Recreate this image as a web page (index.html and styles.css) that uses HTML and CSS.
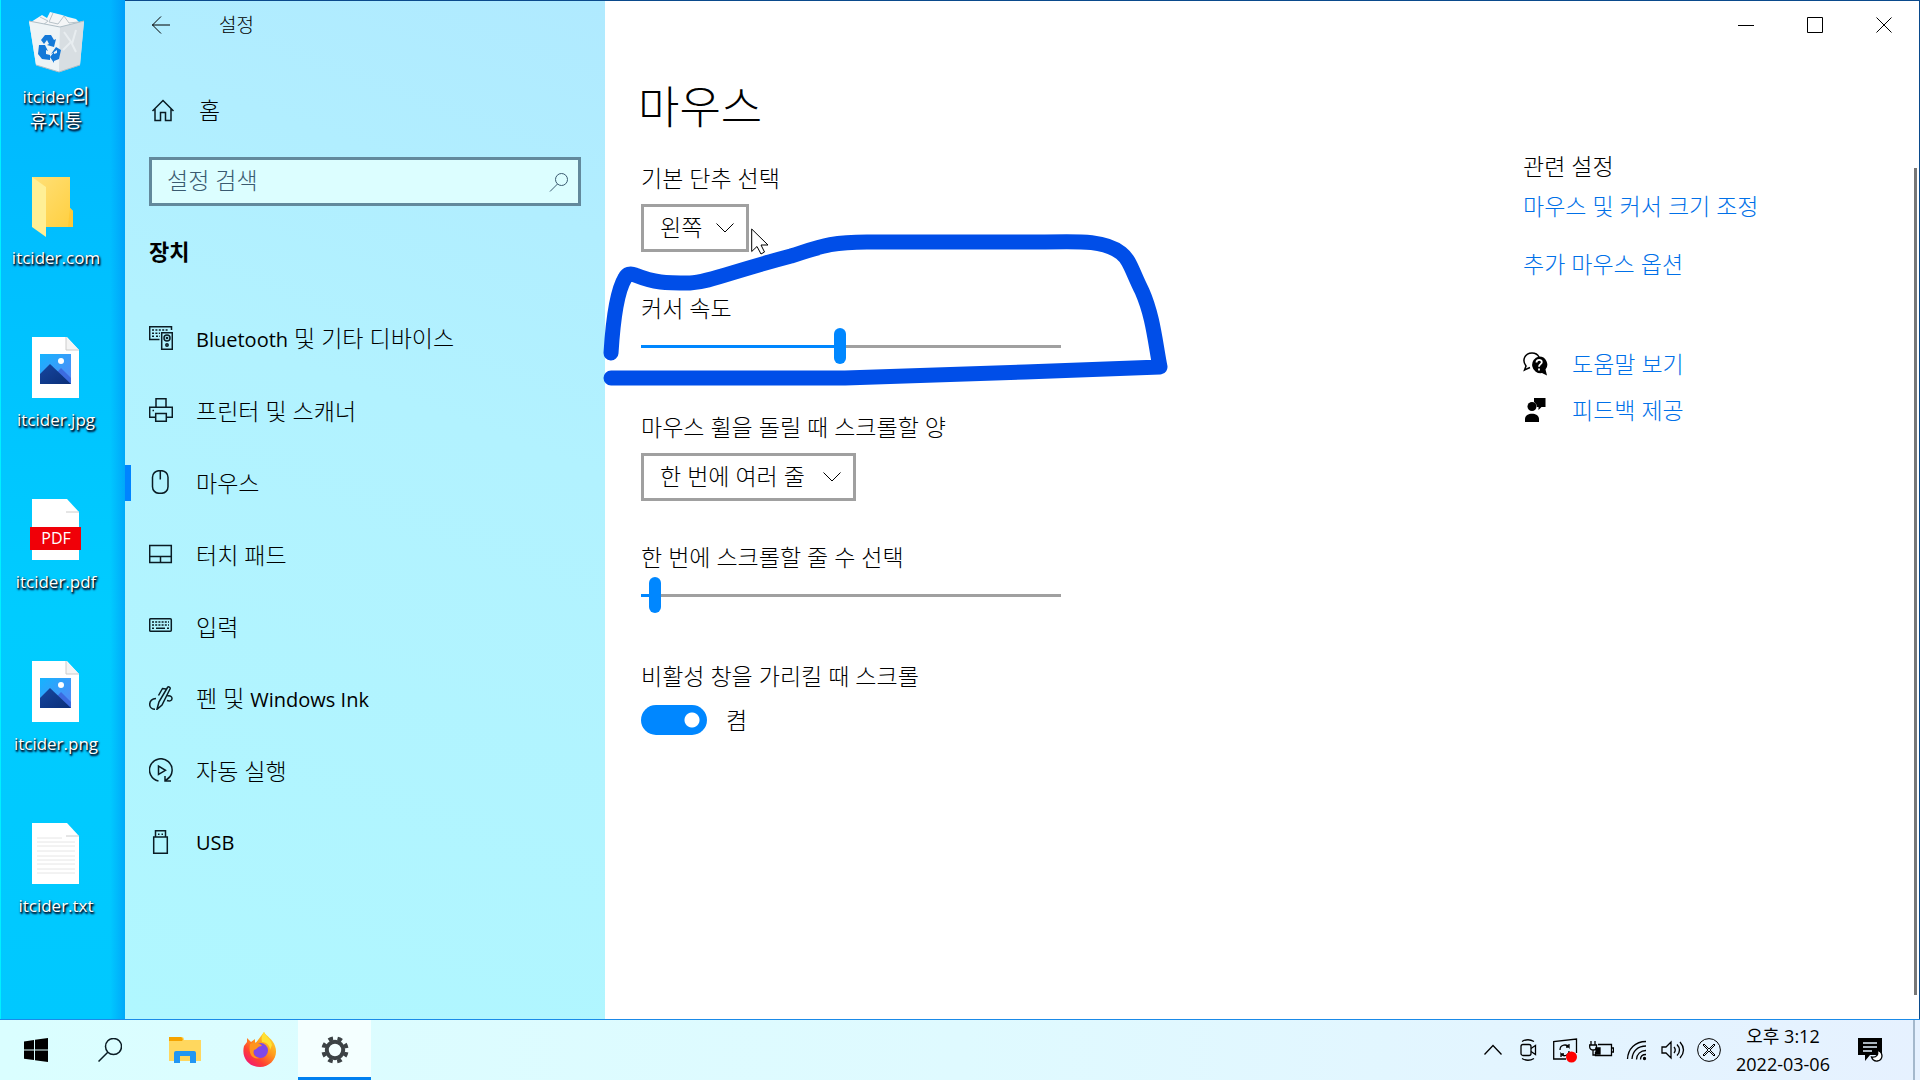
FILE: index.html
```html
<!DOCTYPE html>
<html lang="ko">
<head>
<meta charset="utf-8">
<title>설정</title>
<link rel="stylesheet" href="styles.css">
</head>
<body>
<svg width="0" height="0" class="defs" aria-hidden="true">
  <defs>
    <linearGradient id="sky" x1="0" y1="0" x2="1" y2="1"><stop offset="0" stop-color="#14b4ff"/><stop offset="1" stop-color="#5a86f5"/></linearGradient>
    <linearGradient id="hill" x1="0" y1="0" x2="1" y2="1"><stop offset="0" stop-color="#1746a0"/><stop offset="1" stop-color="#0a2f78"/></linearGradient>
    <linearGradient id="fold" x1="0" y1="0" x2="1" y2="1"><stop offset="0" stop-color="#ffe078"/><stop offset="1" stop-color="#ffcf3f"/></linearGradient>
    <linearGradient id="fox" x1="1" y1="0" x2="0.2" y2="1"><stop offset="0" stop-color="#fff03a"/><stop offset="0.45" stop-color="#ff9a1c"/><stop offset="0.75" stop-color="#ff4033"/><stop offset="1" stop-color="#f0157a"/></linearGradient>
    <symbol id="picture" viewBox="0 0 48 64">
      <path d="M0 1h35l12 13v48H0z" fill="#fff"/><path d="M34 1v13h13" fill="#f4f4f4" stroke="#ccc"/>
      <path d="M8 18h31v30H8z" fill="url(#sky)"/><circle cx="29" cy="25" r="3" fill="#fff"/>
      <path d="M20 42 29 32 39 42v6H20z" fill="#3c6be0"/><path d="M8 38 18 28 39 48H8z" fill="url(#hill)"/>
    </symbol>
  </defs>
</svg>
<div class="screen">
  <nav class="desktop" aria-label="바탕 화면">
    <a class="shortcut" href="#">
      <svg width="56" height="64" viewBox="0 0 56 64">
        <path d="M1 9 8 53l23 7 21-7 4-44-24 5z" fill="#d9edf5"/>
        <path d="M3 10 14 3l5 3 3-6 12 3 6 2 8 2 5 5-21 6z" fill="#f4f6f7"/>
        <path d="M12 5l8 4-5 4M25 1l-4 9 9 2 6-8M36 4l5 7 9-1" fill="none" stroke="#b8c3c9"/>
        <path d="M1 9 32 15 31 60 8 53z" fill="#eef4f6"/><path d="M32 15 56 9 52 53 31 60z" fill="#d8dee2"/>
        <path d="M36 20l7 10-8 8M48 18l-4 14 4 8" stroke="#e8edf0" stroke-width="2" fill="none"/>
        <path d="M1 9 32 15 56 9M8 53l23 7 21-7" fill="none" stroke="#aebdc5"/>
        <g fill="#1479d8"><path d="M13 28l4-5h6l3 5 2-1-2 8-7-2 2-1-2-4-3 4z"/><path d="M11 33l6 0 3 6-2-1 0 4 4 1 0 5-8-1-4-5z"/><path d="M23 42l5-7 5 3-2 9-5 2v2l-4-6 4-5v2l3-1 0-3z"/></g>
      </svg>
      <span><span class="latin">itcider</span>의<br>휴지통</span>
    </a>
    <a class="shortcut" href="#">
      <svg width="48" height="64" viewBox="0 0 48 64"><path d="M0 3h38v31l3 3v16H0z" fill="url(#fold)"/><path d="M38 34l3 3v16h-5z" fill="#ffc936"/><path d="M0 3l14 10v50L0 53z" fill="#ffef95"/></svg>
      <span class="latin">itcider.com</span>
    </a>
    <a class="shortcut" href="#"><svg width="48" height="64"><use href="#picture"/></svg><span class="latin">itcider.jpg</span></a>
    <a class="shortcut" href="#">
      <svg width="52" height="64" viewBox="0 0 52 64"><path d="M2 1h35l12 13v48H2z" fill="#fff"/><path d="M36 14h13" stroke="#ccc"/><path d="M0 29h51v23H0z" fill="#f00008"/><text x="26" y="46" text-anchor="middle" class="pdf-tag">PDF</text></svg>
      <span class="latin">itcider.pdf</span>
    </a>
    <a class="shortcut" href="#"><svg width="48" height="64"><use href="#picture"/></svg><span class="latin">itcider.png</span></a>
    <a class="shortcut" href="#">
      <svg width="48" height="64" viewBox="0 0 48 64"><path d="M0 1h35l12 13v48H0z" fill="#fff"/><path d="M34 14h13" stroke="#ccc"/><path d="M5 16h25M5 20h38M5 24h38M5 29h38M5 34h38M5 38h38M5 42h38M5 47h38M5 51h38" stroke="#e6e6e6"/></svg>
      <span class="latin">itcider.txt</span>
    </a>
  </nav>

  <div class="window">
    <aside class="sidebar">
      <div class="title-row">
        <button class="back" aria-label="뒤로"><svg width="20" height="20" viewBox="0 0 20 20"><path d="M1 10h18M10 1.500 1.500 10l8.500 8.500"/></svg></button>
        <span>설정</span>
      </div>
      <a class="home" href="#"><svg width="24" height="24" viewBox="0 0 24 24" class="bold-line"><path d="M1.500 13 12 2.500 22.500 13M4 11v11.500h5.500v-8h5v8H20V11"/></svg><span>홈</span></a>
      <div class="search">
        <input type="text" placeholder="설정 검색" aria-label="설정 검색">
        <svg width="20" height="20" viewBox="0 0 20 20"><circle cx="12.500" cy="7.500" r="6"/><path d="M8.500 12 1 19.500"/></svg>
      </div>
      <h2>장치</h2>
      <ul class="menu">
        <li><a href="#"><svg width="24" height="24" viewBox="0 0 24 24" class="bold-line"><path d="M10.500 13.500H.7V.7h21.800V4M12.700 6.700h10.600v16.600H12.700z"/><circle cx="18" cy="12" r="3"/><circle cx="18" cy="12" r=".6"/><circle cx="18" cy="19" r="1.200"/><path d="M3 4h17M3 7.200h8M3 10.300h2M7 10.300h4" stroke-dasharray="2 1.400"/></svg><span><span class="latin">Bluetooth</span> 및 기타 디바이스</span></a></li>
        <li><a href="#"><svg width="24" height="24" viewBox="0 0 24 24" class="bold-line"><path d="M7 9V.7h10V9M6 19.300H.7V9.300h22.600v10H18M6.700 15.500h10.600v7.800H6.700zM3.500 12.500h1.500"/></svg><span>프린터 및 스캐너</span></a></li>
        <li class="current"><a href="#" aria-current="page"><svg width="24" height="24" viewBox="0 0 24 24" class="bold-line"><rect x="3.500" y=".7" width="15.500" height="22.600" rx="6.500"/><path d="M11.300 1v8.500"/></svg><span>마우스</span></a></li>
        <li><a href="#"><svg width="24" height="24" viewBox="0 0 24 24" class="bold-line"><path d="M.7 3.500h21.600v17H.7zM.7 14.500h21.600M11.500 14.500v6"/></svg><span>터치 패드</span></a></li>
        <li><a href="#"><svg width="24" height="24" viewBox="0 0 24 24" class="bold-line"><rect x=".7" y="4.700" width="21.600" height="12.600" rx="1"/><path d="M3 8h17M3 11h17" stroke-dasharray="2 1.200"/><path d="M3 14.300h2M7 14.300h9M18 14.300h2"/></svg><span>입력</span></a></li>
        <li><a href="#"><svg width="24" height="24" viewBox="0 0 24 24" class="bold-line"><path d="M7 12.500C2 13 .7 16 .7 18.500c0 3 2.500 4.800 5.300 4.800M8 23.300l2-7.500L18.500 1.500c1-1.500 3.200 0 2.500 1.500L13 19zM17 3l-3.500-.5-4 7M18.500 10c3-.5 4.500.5 4.500 2.500s-2 3-5 2"/></svg><span>펜 및 <span class="latin">Windows Ink</span></span></a></li>
        <li><a href="#"><svg width="24" height="24" viewBox="0 0 24 24" class="bold-line"><path d="M9.500 23.100A11.300 11.300 0 1 1 18 21.500M16 18v5h6M16.500 22.500l5-4.500M9.500 8v8.500l7-4.200z"/></svg><span>자동 실행</span></a></li>
        <li><a href="#"><svg width="24" height="24" viewBox="0 0 24 24" class="bold-line"><path d="M6.500 7V.7h10V7M4.700 7h13.600v16.300H4.700zM9 4.200h1.500M12.500 4.200H14"/></svg><span class="latin">USB</span></a></li>
      </ul>
    </aside>

    <div class="pane">
      <div class="caption">
        <button aria-label="최소화"><svg width="16" height="16" viewBox="0 0 16 16"><path d="M0 8.500h16"/></svg></button>
        <button aria-label="최대화"><svg width="16" height="16" viewBox="0 0 16 16"><path d="M.5.5h15v15H.5z"/></svg></button>
        <button aria-label="닫기"><svg width="16" height="16" viewBox="0 0 16 16"><path d="m.5.5 15 15M15.500.5l-15 15"/></svg></button>
      </div>
      <div class="columns">
        <main class="settings">
          <h1>마우스</h1>
          <div class="field first">
            <label for="button">기본 단추 선택</label>
            <div class="drop"><select id="button"><option>왼쪽</option></select><svg width="18" height="10" viewBox="0 0 18 10"><path d="m.5.5 8.500 8.500 8.500-8.500"/></svg></div>
          </div>
          <div class="field">
            <label for="speed">커서 속도</label>
            <input id="speed" class="slider" type="range" min="1" max="20" value="10" style="--fill:47%">
          </div>
          <div class="field after-slider">
            <label for="wheel">마우스 휠을 돌릴 때 스크롤할 양</label>
            <div class="drop wide"><select id="wheel"><option>한 번에 여러 줄</option></select><svg width="18" height="10" viewBox="0 0 18 10"><path d="m.5.5 8.500 8.500 8.500-8.500"/></svg></div>
          </div>
          <div class="field">
            <label for="lines">한 번에 스크롤할 줄 수 선택</label>
            <input id="lines" class="slider" type="range" min="1" max="100" value="3" style="--fill:3%">
          </div>
          <div class="field after-slider">
            <label for="inactive">비활성 창을 가리킬 때 스크롤</label>
            <div class="toggle"><input id="inactive" type="checkbox" role="switch" checked><span>켬</span></div>
          </div>
        </main>
        <section class="related">
          <h3>관련 설정</h3>
          <a href="#">마우스 및 커서 크기 조정</a>
          <a href="#" class="second">추가 마우스 옵션</a>
          <div class="support">
            <a href="#"><svg width="25" height="24" viewBox="0 0 25 24"><path d="M7 15.500 1.500 18l1.500-4C-1.500 8 2 1 9 1c4 0 6 2 7 4" fill="none" stroke="#000" stroke-width="1.500"/><path d="M16 4.500a8 8 0 0 1 6.500 13L24 23.500l-5-2.500A8.200 8.200 0 1 1 16 4.500z"/><path d="M13.500 10.500c0-3.500 5.500-3.300 5.300-.3 0 2-2.800 2-2.800 4.500M16 16.500v2" fill="none" stroke="#fff" stroke-width="1.800"/></svg><span>도움말 보기</span></a>
            <a href="#"><svg width="25" height="24" viewBox="0 0 25 24"><path d="M11 0h11.500v9h-4l-3 3V9H14a6 6 0 0 0-3-5z"/><circle cx="9" cy="8.500" r="4.500"/><path d="M2 24v-3c0-7 14-7 14 0v3z"/></svg><span>피드백 제공</span></a>
          </div>
        </section>
      </div>
      <div class="scrollbar"></div>
      <svg class="marker" width="570" height="400" viewBox="0 0 570 400"><path d="M6 352C8 320 12 290 20 277Q23 271 30 274C50 282 60 282 85 282C105 281 125 271 186 255C215 246 225 241 262 241H440C478 240 501 240 516 252C525 259 527 270 537 290C548 315 550 340 555 366L420 371 240 377H6"/></svg>
      <svg class="pointer" width="20" height="27" viewBox="0 0 20 27"><path d="M.7 1v22.500L6 18.500l4 7.500 3.500-2-3.500-7h7z"/></svg>
    </div>
  </div>

  <footer class="taskbar">
    <div class="apps">
      <button class="start" aria-label="시작"><svg width="24" height="24" viewBox="0 0 24 24"><path d="M0 3.500 10 2v9.500H0zM11 1.800 24 0v11.500H11zM0 12.500h10V22L0 20.700zM11 12.500h13V24l-13-1.800z"/></svg></button>
      <button aria-label="검색"><svg width="24" height="24" viewBox="0 0 24 24" class="bold-line"><circle cx="15.500" cy="8.500" r="8"/><path d="M9.800 14.300.5 23.500"/></svg></button>
      <button aria-label="파일 탐색기"><svg width="34" height="28" viewBox="0 0 34 28"><path d="M1 1h13q2 0 2 3H33v21H1z" fill="#ffd75e"/><path d="M1 1h12q3 2 1 4H1z" fill="#f5a300"/><path d="M6 27V17q0-2 2-2h18q2 0 2 2v10h-6v-7H12v7z" fill="#2196f3"/></svg></button>
      <button aria-label="Firefox"><svg width="36" height="36" viewBox="0 0 36 36"><path d="M22 0c2 4 9 7 11 14 4 10-4 21-15 21C7 35-1 26 2 14l3-4V6l4 4 4-3v5z" fill="url(#fox)"/><circle cx="18.500" cy="18.500" r="7.500" fill="#8048e8"/><path d="M8 12c5-3 10-1 12 2-5 0-4 3-8 4-2 5 2 8 6 8-7 2-12-3-10-14z" fill="#ff941e"/><path d="M20 10c5 0 8 4 8 8l2-5c-1-6-6-8-8-13-2 3-3 6-2 10z" fill="#ffe233"/></svg></button>
      <button class="active" aria-label="설정"><svg width="28" height="28" viewBox="0 0 28 28"><g fill="none" stroke="#3c4245"><circle cx="14" cy="14" r="8.200" stroke-width="4"/><circle cx="14" cy="14" r="11.600" stroke-width="4" stroke-dasharray="4.560 4.550" stroke-dashoffset="-2.200"/></g></svg></button>
    </div>
    <div class="tray">
      <button aria-label="숨겨진 아이콘"><svg width="20" height="24" viewBox="0 0 20 24"><path d="m1.500 16.500 8.500-9 8.500 9"/></svg></button>
      <button aria-label="카메라"><svg width="18" height="24" viewBox="0 0 18 24"><rect x="1" y="6.500" width="10" height="11" rx="2"/><path d="m11 10.500 4.500-3v9L11 13.500M2 3.500Q8 0 14 3.500M2 20.500Q8 24 14 20.500"/></svg></button>
      <button aria-label="업데이트"><svg width="25" height="25" viewBox="0 0 25 25"><path d="M13 21H.7V3.500L23.500 1v14M7 12c0-6 7-6 9-3V6M16 9h-3M16 13c0 5-6 6-8 3v3M8 16h3"/><circle cx="18.500" cy="19" r="5.500" fill="#f00" stroke="none"/></svg></button>
      <button aria-label="배터리"><svg width="25" height="24" viewBox="0 0 25 24"><path d="M9 6.500h13.500v11H6.500V14M23 10h1.500v4H23M2 3v4M6 3v4M.7 7h6.800v2c0 4-6.800 4-6.800 0zM4 12v5h3"/><path d="M7 10h4v6H7z" fill="#000"/></svg></button>
      <button aria-label="네트워크"><svg width="22" height="24" viewBox="0 0 22 24"><path d="M1.500 21C2 11 9 3.500 20 3.500M6 21C6.500 13 12 8 20 8M10.500 21.500c0-5 4-9 9.500-9M14.500 21.500c0-3 2-5 5.500-5"/><circle cx="18.500" cy="20.500" r="1" fill="#000"/></svg></button>
      <button aria-label="볼륨"><svg width="24" height="24" viewBox="0 0 24 24"><path d="M1 9v6h4l5 5V4L5 9zM13 9q2.500 3 0 6M16 6.500q5 5.500 0 11M19 4q7 8 0 16"/></svg></button>
      <button aria-label="입력기 꺼짐"><svg width="24" height="24" viewBox="0 0 24 24" class="thin"><circle cx="12" cy="12" r="11.400"/><path d="m6 7 1-1 5 5 5-5 1 1-5 5 5 5-1 1-5-5-5 5-1-1 5-5z"/></svg></button>
    </div>
    <div class="clock"><span>오후 3:12</span><span>2022-03-06</span></div>
    <button class="notify" aria-label="알림"><svg width="26" height="24" viewBox="0 0 26 24"><path d="M0 0h24v17H12l-5 6v-6H0z"/><path d="M5 5h14M5 9h14M5 13h9" stroke="#e4f2ff" stroke-width="1.500"/><path d="M18.500 12c3 4 0 8-5 7 2 6 10 5 10.500-1 0-3-2-5-5.500-6z" fill="#fff" stroke="#000" stroke-width="1.300"/></svg></button>
    <button class="show-desktop" aria-label="바탕 화면 보기"></button>
  </footer>
</div>
</body>
</html>
```
FILE: styles.css
```css
* { box-sizing: border-box; }
body {
  margin: 0;
  font: 300 23px/32px "Open Sans", "Noto Sans CJK KR", sans-serif;
  color: #000;
  background: #00c4ff;
}
h1, h2, h3, ul { margin: 0; padding: 0; font-weight: 300; }
a { color: inherit; text-decoration: none; }
button { border: 0; padding: 0; background: none; font: inherit; display: flex; align-items: center; justify-content: center; }
svg { display: block; flex: none; }
.defs { position: absolute; }
.latin { font-size: 20px; font-weight: 400; }

.screen { min-height: 100vh; display: grid; grid-template: 1fr 61px / 125px 1fr; }

/* Desktop shortcuts */
.desktop {
  background:
    linear-gradient(90deg, #00f0ff 1px, transparent 1px 110px, rgba(0, 120, 240, .4)),
    linear-gradient(#00b6ff, #00ccff 60%, #00c8ff);
  display: grid;
  grid-auto-rows: 162px;
  align-content: start;
}
.shortcut {
  display: flex;
  flex-direction: column;
  align-items: center;
  gap: 8px;
  padding: 12px 13px 0 0;
  color: #fff;
  font-size: 19px;
  font-weight: 400;
  line-height: 24px;
  text-align: center;
  text-shadow: 1px 1px 2px #000, 1px 2px 2px #003;
}
.shortcut .latin { font-size: 17px; }
.pdf-tag { font: 400 16px "Open Sans", sans-serif; fill: #fff; text-shadow: none; }

/* Settings window */
.window {
  display: grid;
  grid-template-columns: 480px 1fr;
  border-top: 1px solid #0a4a8c;
  border-right: 1px solid #0a4a8c;
}
.sidebar { background: linear-gradient(200deg, #b0eaff, #b2f2ff 40%, #b0f7ff); }
.sidebar svg, .caption svg, .drop svg, .tray svg { fill: none; stroke: #000; stroke-width: 1; }
.sidebar .bold-line, .apps .bold-line { fill: none; stroke: #0a1c24; stroke-width: 1.5; }

.title-row { display: flex; align-items: center; gap: 48px; height: 48px; padding-left: 26px; font-size: 19px; }
.home { display: flex; align-items: center; gap: 24px; height: 48px; margin-top: 37px; padding-left: 26px; }
.search { position: relative; margin: 23px 24px 0; }
.search input {
  display: block;
  width: 100%;
  height: 49px;
  padding: 0 50px 4px 15px;
  border: 3px solid #62899c;
  background: #dcfeff;
  font: inherit;
}
.search input::placeholder { color: #3a5a70; opacity: 1; }
.search svg { position: absolute; right: 12px; top: 15px; stroke: #3a5a70; }
.sidebar h2 { margin: 29px 24px 36px; font-size: 22px; font-weight: 700; }
.menu { list-style: none; }
.menu li { height: 72px; display: flex; align-items: center; }
.menu a { display: flex; align-items: center; gap: 23px; height: 36px; padding-left: 24px; }
.menu .current a { border-left: 6px solid #0084ff; padding-left: 18px; }
.menu svg { margin-bottom: 2px; }

.pane { position: relative; background: #fff; }
.caption { display: flex; justify-content: flex-end; height: 48px; padding-right: 1px; }
.caption button { width: 69px; }
.columns { display: flex; }
.settings { flex: 1; padding: 30px 0 0 36px; }
h1 { font-size: 45px; line-height: 56px; margin-left: -3px; }
.field { margin-top: 40px; }
.field.first { margin-top: 27px; }
.field.after-slider { margin-top: 47px; }
.field label { display: block; }
.drop { position: relative; width: fit-content; margin-top: 10px; }
.drop select {
  display: block;
  appearance: none;
  width: 108px;
  height: 48px;
  padding: 0 44px 2px 16px;
  border: 3px solid #a0a0a0;
  border-radius: 0;
  background: #fff;
  color: #000;
  font: inherit;
}
.drop.wide select { width: 215px; }
.drop svg { position: absolute; right: 15px; top: 19px; pointer-events: none; }

.slider {
  display: block;
  appearance: none;
  width: 420px;
  max-width: 100%;
  height: 36px;
  margin: 4px 0 0;
  background: linear-gradient(90deg, #0087ff var(--fill), #a0a0a0 var(--fill)) center / 100% 3px no-repeat;
}
.slider::-webkit-slider-thumb { appearance: none; width: 12px; height: 36px; border-radius: 6px; background: #0087ff; }

.toggle { display: flex; align-items: center; gap: 19px; height: 30px; margin-top: 13px; }
.toggle input {
  appearance: none;
  width: 66px;
  height: 30px;
  margin: 0;
  border-radius: 15px;
  background: radial-gradient(circle at 51px 15px, #fff 7px, #0087ff 8px);
}

.related { width: 396px; padding-top: 101px; display: flex; flex-direction: column; align-items: flex-start; }
.related h3 { font-size: 23px; margin-bottom: 8px; }
.related a { color: #0070e8; }
.related .second { margin-top: 26px; }
.support { display: grid; gap: 14px; margin-top: 68px; }
.support a { display: flex; align-items: center; gap: 24px; }
.scrollbar { position: absolute; top: 167px; right: 2px; bottom: 24px; width: 3px; background: #777; }

.marker { position: absolute; left: 0; top: 0; pointer-events: none; overflow: visible; fill: none; stroke: #004ee8; stroke-width: 15; stroke-linecap: round; stroke-linejoin: round; }
.pointer { position: absolute; left: 146px; top: 227px; fill: #fff; stroke: #000; stroke-width: 1; }

/* Taskbar */
.taskbar {
  grid-column: 1 / -1;
  display: flex;
  border-top: 1px solid #1a8ae8;
  background: linear-gradient(90deg, #dafeff, #dffaff 50%, #e6f1ff);
}
.apps { display: flex; gap: 2px; margin-right: auto; }
.apps button { width: 73px; }
.apps .start { width: 71px; }
.apps .active { background: #f4ffff; border-bottom: 3px solid #0080f0; padding-top: 3px; }
.tray { display: flex; align-items: center; }
.tray button { width: 36px; }
.tray svg { stroke-width: 1.3; }
.tray .thin { stroke-width: 1; }
.clock { display: flex; flex-direction: column; justify-content: center; align-items: center; width: 112px; font-size: 18px; font-weight: 400; line-height: 28px; }
.notify { width: 60px; margin: 0 12px 0 2px; }
.show-desktop { width: 7px; border-left: 2px solid #a4b8cc; }
```
